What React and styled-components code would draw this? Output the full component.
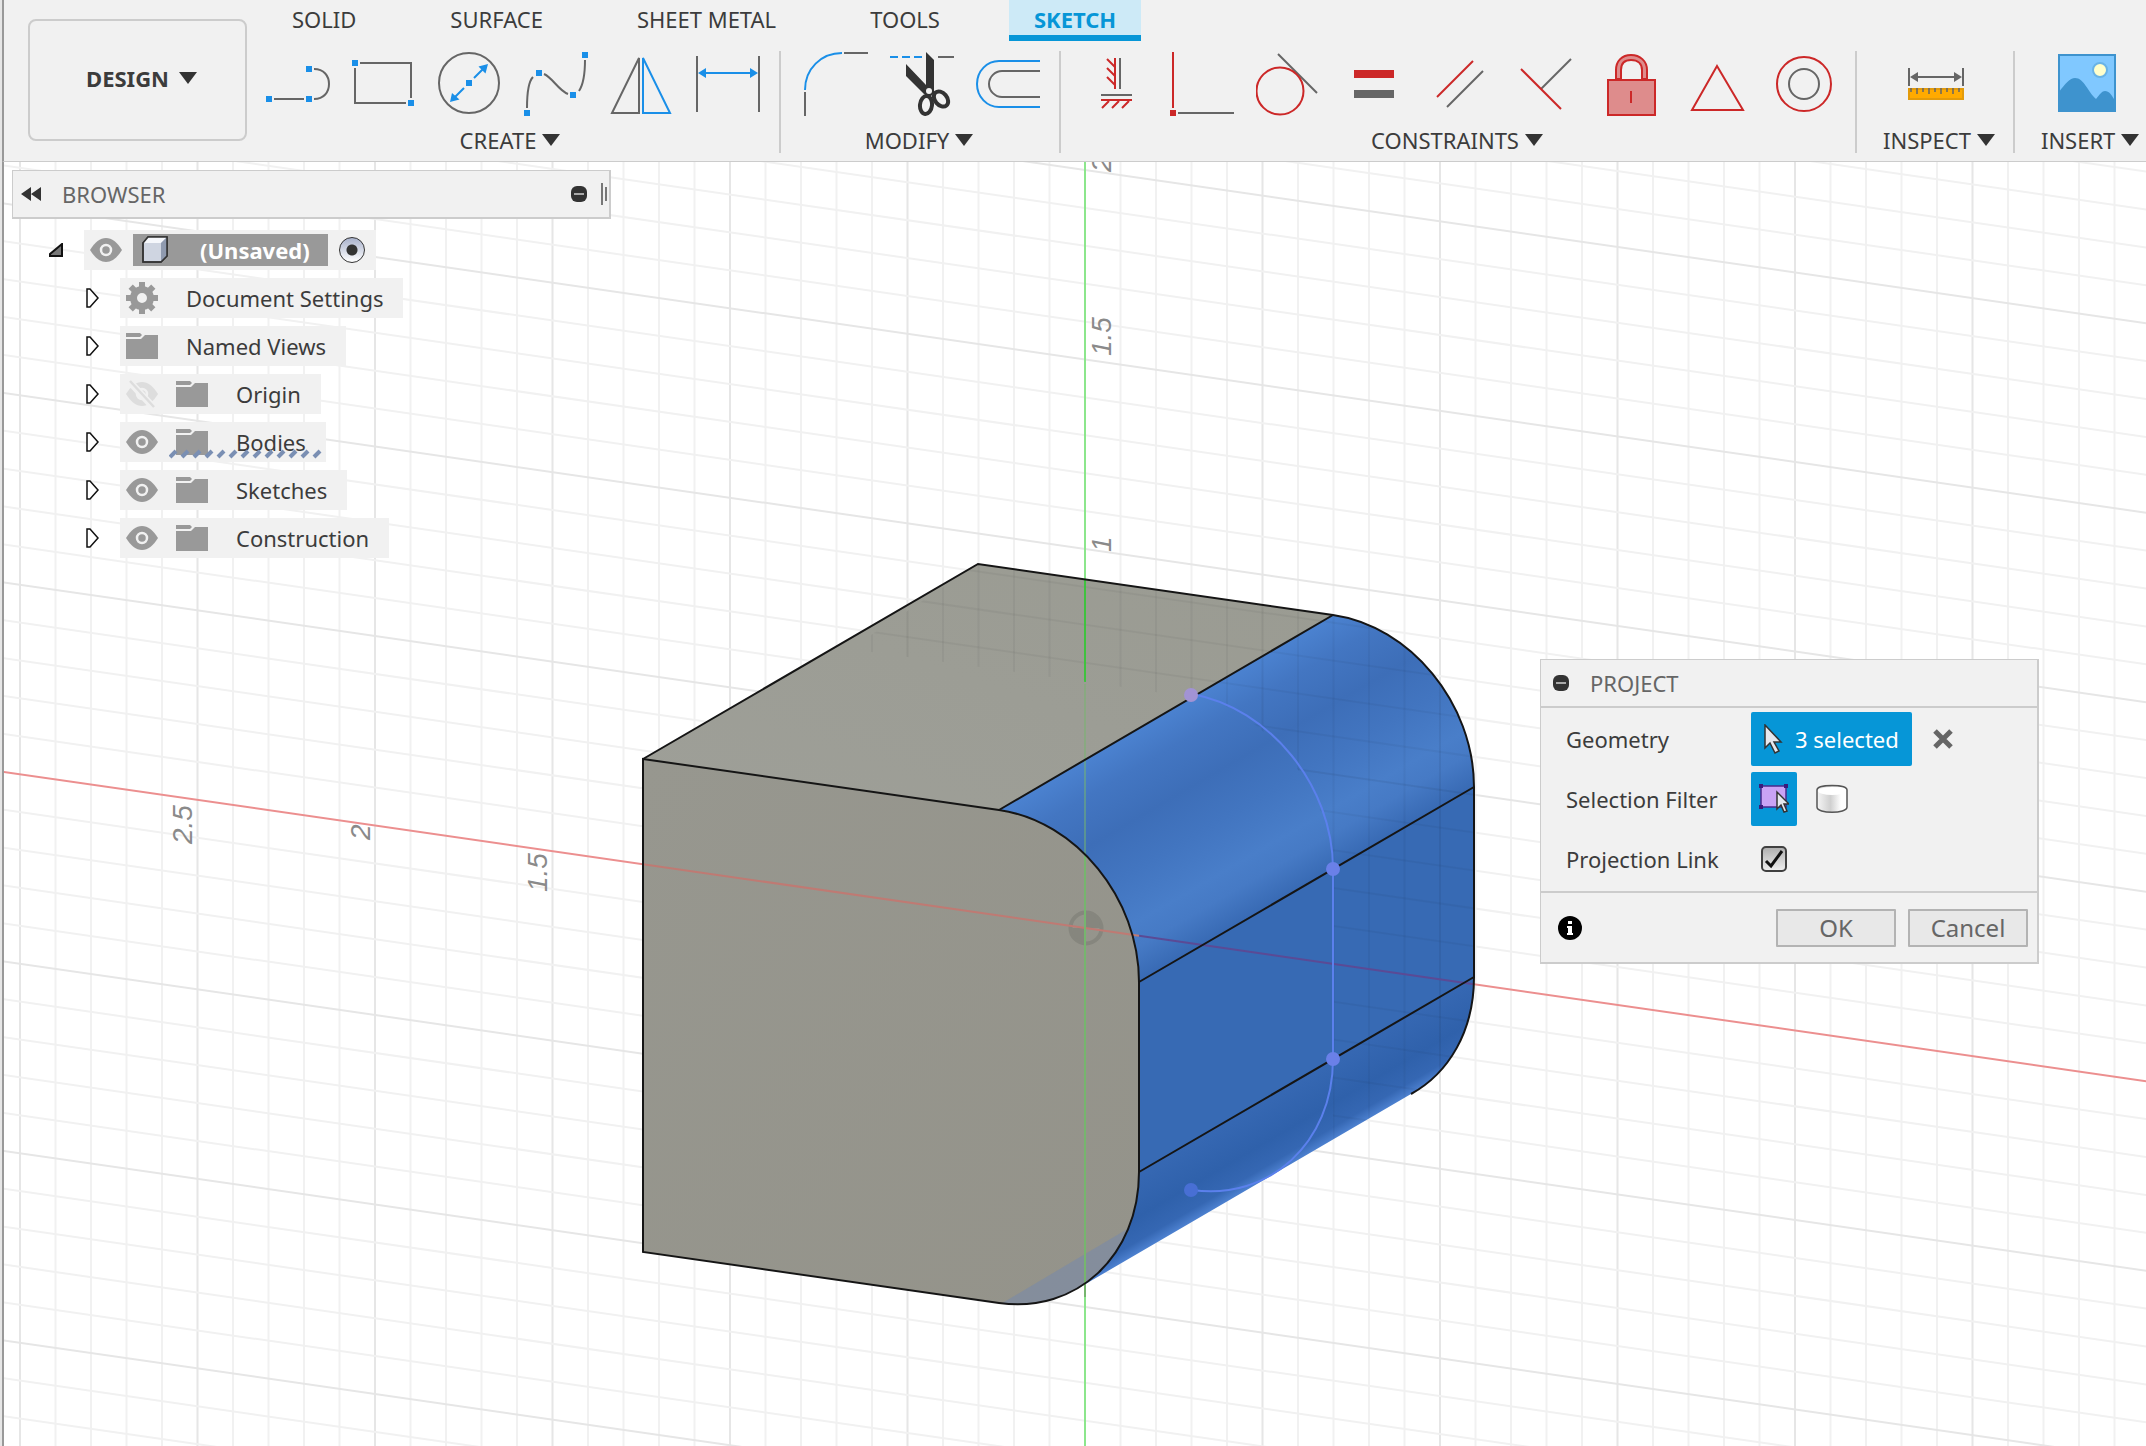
import React from 'react';
import styled, { createGlobalStyle } from 'styled-components';

const GlobalStyle = createGlobalStyle`
    * {
        box-sizing: border-box;
    }
    body {
        margin: 0;
        background: #FFFFFF;
        color: #3C3C3C;
        font-family: "Noto Sans", "Open Sans", sans-serif;
        font-size: 22px;
        line-height: 28px;
    }
    button {
        margin: 0;
        padding: 0;
        border: 0;
        background: none;
        color: inherit;
        font: inherit;
    }
    svg {
        display: block;
        flex: none;
    }
`;

const Page = styled.div`
    display: flex;
    flex-direction: column;
    min-height: 100vh;
    border-left: 2px solid #E6E6E6;
    overflow: hidden;
`;

/* toolbar */
const Toolbar = styled.header`
    display: flex;
    height: 162px;
    background: #F1F1F1;
    border-left: 2px solid #999999;
    border-bottom: 1px solid #CCCCCC;
`;
const Workspace = styled.button`
    display: flex;
    align-items: center;
    justify-content: center;
    gap: 10px;
    flex: none;
    width: 219px;
    height: 122px;
    margin: 19px 0 0 24px;
    padding: 0 0 4px 8px;
    border: 2px solid #CCCCCC;
    border-radius: 8px;
    font-weight: bold;
`;
const ToolArea = styled.div`
    flex: 1;
    min-width: 0;
`;
const Tabs = styled.nav`
    display: flex;
    gap: 44px;
    height: 41px;
    margin-left: 20px;
`;
const Tab = styled.button`
    height: 41px;
    padding: 2px 25px 0;
    white-space: nowrap;
    border-bottom: 6px solid ${({$active}) => $active ? '#0696D7' : 'transparent'};
    background: ${({$active}) => $active ? '#CDEAF7' : 'transparent'};
    color: ${({$active}) => $active ? '#0696D7' : 'inherit'};
    font-weight: ${({$active}) => $active ? 'bold' : 'normal'};
`;
const Groups = styled.div`
    display: flex;
    height: 102px;
    margin-top: 10px;
`;
const Group = styled.section`
    display: flex;
    flex: none;
    flex-direction: column;
    align-items: center;
    padding: ${({$compact}) => $compact ? '0 18px 0 20px' : '0 19px 0 23px'};
    border-left: 2px solid #CCCCCC;

    &:first-child {
        padding-left: 17px;
        border-left-color: transparent;
    }
`;
const Tools = styled.div`
    display: flex;
    gap: 22px;
    padding: 1px 0 10px;
`;
const Tool = styled.button`
    width: 64px;
    height: 64px;
`;
const GroupLabel = styled.button`
    display: flex;
    align-items: center;
    gap: 6px;
    margin: ${({$compact}) => $compact ? '0 0 0 6px' : '0 6px 0 0'};
`;

/* canvas */
const Stage = styled.main`
    position: relative;
    flex: 1;
    border-left: 2px solid #999999;
`;
const Scene = styled.svg`
    position: absolute;
    top: 0;
    left: 0;
    width: 100%;
    height: 100%;
`;

/* browser */
const Browser = styled.aside`
    position: relative;
    width: 599px;
    margin: 8px 0 0 8px;
`;
const BrowserBar = styled.div`
    display: flex;
    align-items: center;
    height: 49px;
    padding: 0 2px 0 8px;
    background: #F1F1F1;
    border: solid #CCCCCC;
    border-width: 1px 2px 2px 1px;
    color: #666666;
`;
const PanelTitle = styled.h2`
    flex: 1;
    margin: 0 0 0 21px;
    font-size: 22px;
    font-weight: normal;
`;
const Grip = styled.div`
    display: flex;
    gap: 2px;
    align-items: center;
    margin-left: 14px;

    &::before, &::after {
        content: "";
        width: 2px;
        height: 22px;
        background: #777777;
    }
    &::after {
        height: 14px;
    }
`;
const Tree = styled.ul`
    display: flex;
    flex-direction: column;
    gap: 8px;
    margin: 11px 0 0;
    padding: 0;
    list-style: none;
`;
const Row = styled.li`
    display: flex;
    align-items: center;
    height: 40px;
    padding-left: ${({$root}) => $root ? '37px' : '74px'};
`;
const Expander = styled.button`
    width: ${({$root}) => $root ? '35px' : '34px'};
`;
const Item = styled.div`
    position: relative;
    display: flex;
    align-items: center;
    gap: 18px;
    height: 40px;
    padding: 0 20px 0 6px;
    background: #F1F1F1;
`;
const RootItem = styled(Item)`
    gap: 11px;
    padding-right: 11px;
`;
const ItemName = styled.span`
    margin-left: 10px;
    white-space: nowrap;
`;
const RootName = styled.div`
    display: flex;
    align-items: center;
    gap: 31px;
    height: 32px;
    padding: 0 18px 0 8px;
    background: #999999;
    color: #FFFFFF;
    font-weight: bold;
`;
const Activate = styled.input`
    appearance: none;
    width: 26px;
    height: 26px;
    margin: 0;
    border: 1px solid #333333;
    border-radius: 50%;
    background: radial-gradient(circle, #333333 5px, transparent 6px), linear-gradient(#A9B2CC, #FFFFFF);
`;
const Hatch = styled.svg`
    position: absolute;
    left: 49px;
    bottom: 3px;
`;

/* dialog */
const Dialog = styled.form`
    position: absolute;
    top: 497px;
    right: 107px;
    width: 499px;
    background: #F1F1F1;
    border: solid #CCCCCC;
    border-width: 1px 2px 2px 1px;
`;
const DialogHeader = styled.div`
    display: flex;
    align-items: center;
    height: 48px;
    padding-left: 12px;
    border-bottom: 2px solid #CCCCCC;
    color: #666666;
`;
const Fields = styled.div`
    display: grid;
    grid-template-columns: 185px 1fr;
    grid-auto-rows: 54px;
    row-gap: 6px;
    align-items: center;
    height: 185px;
    padding: 4px 0 0 25px;
    border-bottom: 2px solid #CCCCCC;
`;
const FieldName = styled.label`
    white-space: nowrap;
`;
const Field = styled.div`
    display: flex;
    align-items: center;
    height: 54px;
`;
const Selection = styled.button`
    display: flex;
    align-items: center;
    gap: 12px;
    height: 54px;
    padding: 0 13px 0 12px;
    border-radius: 2px;
    background: #0696D7;
    color: #FFFFFF;
`;
const ClearButton = styled.button`
    margin-left: 20px;
`;
const FilterButton = styled.button`
    display: flex;
    align-items: center;
    justify-content: center;
    width: 46px;
    height: 54px;
    margin-right: 12px;
    border-radius: 2px;
    background: ${({$active}) => $active ? '#0696D7' : 'transparent'};
`;
const CheckWrap = styled.span`
    position: relative;
    margin-left: 10px;

    svg {
        position: absolute;
        top: 0;
        left: 0;
        pointer-events: none;
    }
`;
const Checkbox = styled.input`
    display: block;
    appearance: none;
    width: 26px;
    height: 26px;
    margin: 0;
    border: 2px solid #404040;
    border-radius: 5px;
    background: linear-gradient(#B0B0B0, #EEEEEE);
`;
const DialogFooter = styled.div`
    display: flex;
    align-items: center;
    gap: 12px;
    height: 69px;
    padding: 0 9px 0 17px;
`;
const Info = styled.button`
    margin-right: auto;
`;
const ActionButton = styled.button`
    width: 120px;
    height: 38px;
    border: 2px solid #B3B3B3;
    border-radius: 1px;
    background: #E8E8E8;
    color: #666666;
    font-size: 24px;
`;

const GRAY = '#666666';
const BLUE = '#1A8FE8';
const RED = '#CC2828';

const Dot = ({x, y, color = BLUE}) => <rect x={x - 3} y={y - 3} width="6" height="6" fill={color} />;

const Caret = () => (
    <svg width="18" height="12" viewBox="0 0 18 12"><path d="M0 0H18L9 12Z" fill="#333333" /></svg>
);

const icons = {
    line: <>
        <path d="M8 47H38M48 17C58 17 63 24 63 32S58 47 48 47" stroke={GRAY} />
        <Dot x={3} y={47} /><Dot x={43} y={17} /><Dot x={43} y={47} />
    </>,
    rectangle: <>
        <path d="M8 11H59V46M54 51H3V16" stroke={GRAY} />
        <Dot x={3} y={11} /><Dot x={59} y={51} />
    </>,
    circle: <>
        <circle cx="31" cy="31" r="30" stroke={GRAY} />
        <path d="M36 26L45 17M26 36L17 45" stroke={BLUE} />
        <path d="M50 12L40.500 14.500L47.500 21.500ZM12 50L14 41L21.500 47.500Z" fill={BLUE} />
        <Dot x={31} y={31} />
    </>,
    spline: <>
        <path d="M3 56C3 40 5 29 9 25M20 22C29 26 34 38 44 42M55 39C59 33 61 22 61 8" stroke={GRAY} />
        <Dot x={3} y={61} /><Dot x={15} y={21} /><Dot x={49} y={43} /><Dot x={61} y={3} />
    </>,
    mirror: <>
        <path d="M29 6V61H2Z" stroke={GRAY} />
        <path d="M33 6V61H60Z" stroke={BLUE} />
    </>,
    dimension: <>
        <path d="M1 4V60M63 4V60" stroke={GRAY} />
        <path d="M5 21H59" stroke={BLUE} />
        <path d="M2 21L10 16V26ZM62 21L54 16V26Z" fill={BLUE} />
    </>,
    fillet: <>
        <path d="M1 38C1 17 17 1 38 1" stroke={BLUE} />
        <path d="M40 1H64M1 40V64" stroke={GRAY} />
    </>,
    trim: <>
        <path d="M0 5H8M12 5H20M24 5H32" stroke={BLUE} />
        <path d="M48 5H64" stroke={GRAY} />
        <path d="M36 0L44 8V41L39 46L34 42L16 24V12L36 33Z" fill="#333333" />
        <ellipse cx="36" cy="53" rx="6" ry="9" stroke="#333333" strokeWidth="4" transform="rotate(6 36 53)" />
        <ellipse cx="51" cy="47" rx="6" ry="8.500" stroke="#333333" strokeWidth="4" transform="rotate(-40 51 47)" />
        <circle cx="39" cy="39" r="3" fill="#F1F1F1" />
    </>,
    offset: <>
        <path d="M64 9H23C11 9 1 19 1 32S11 55 23 55H64" stroke={BLUE} />
        <path d="M64 19H26C19 19 13 25 13 32S19 45 26 45H64" stroke={GRAY} />
    </>,
    horizontal: <>
        <path d="M36 6V37M17 43H48" stroke={GRAY} />
        <path d="M31 6V37M23 7L31 15M23 16L31 24M23 25L31 33M17 48H48M25 49L18 56M35 49L28 56M45 49L38 56" stroke={RED} />
    </>,
    coincident: <>
        <path d="M3 0V56" stroke={RED} />
        <path d="M8 61H64" stroke={GRAY} />
        <Dot x={3} y={61} color={RED} />
    </>,
    tangent: <>
        <path d="M22 2L61 41" stroke={GRAY} />
        <circle cx="24" cy="39" r="23.500" stroke={RED} />
    </>,
    equal: <>
        <rect x="12" y="18" width="40" height="8" fill={RED} />
        <rect x="12" y="38" width="40" height="8" fill={GRAY} />
    </>,
    parallel: <>
        <path d="M9 45L45 9" stroke={RED} />
        <path d="M19 55L55 19" stroke={GRAY} />
    </>,
    perpendicular: <>
        <path d="M27 37L57 7" stroke={GRAY} />
        <path d="M7 17L47 57" stroke={RED} />
    </>,
    fix: <>
        <path d="M16 27V18C16 9 22 3 31 3S47 9 47 18V27H42V18C42 12 38 8 31 8S21 12 21 18V27Z" fill="#DE8C8C" stroke={RED} />
        <rect x="8" y="28" width="47" height="35" fill="#DE8C8C" stroke={RED} />
        <path d="M31 39V51" stroke={RED} />
    </>,
    midpoint: <path d="M31 14L57 58H6Z" stroke={RED} />,
    concentric: <>
        <circle cx="32" cy="32" r="27" stroke={RED} />
        <circle cx="32" cy="32" r="15" stroke={GRAY} />
    </>,
    measure: <>
        <path d="M5 16V34M59 16V34M10 25H54" stroke={GRAY} />
        <path d="M6 25L14 20V30ZM58 25L50 20V30Z" fill={GRAY} />
        <rect x="5" y="37" width="54" height="10" fill="#FFAA00" stroke="#E39B0B" />
        <path d="M7 36V40M13 36V42M19 36V40M25 36V42M31 36V40M37 36V42M43 36V40M49 36V42M55 36V40" stroke={GRAY} strokeWidth="1.500" />
    </>,
    canvas: <>
        <rect x="4" y="3" width="56" height="56" fill="#80C8FF" stroke="#3E93CE" />
        <path d="M4 40C10 32 15 26 20 26C29 26 33 40 41 47C45 42 47 39 50 39C54 39 57 43 60 49V60H4Z" fill="#3E93CE" />
        <circle cx="45" cy="18" r="7" fill="#FFFFCC" stroke="#69B3E6" />
    </>,
};

const tabs = ['SOLID', 'SURFACE', 'SHEET METAL', 'TOOLS', 'SKETCH'];
const groups = [
    {name: 'CREATE', tools: ['line', 'rectangle', 'circle', 'spline', 'mirror', 'dimension']},
    {name: 'MODIFY', tools: ['fillet', 'trim', 'offset']},
    {name: 'CONSTRAINTS', tools: ['horizontal', 'coincident', 'tangent', 'equal', 'parallel', 'perpendicular', 'fix', 'midpoint', 'concentric']},
    {name: 'INSPECT', tools: ['measure']},
    {name: 'INSERT', tools: ['canvas']},
];
const nodes = [
    {name: 'Document Settings', icon: 'gear'},
    {name: 'Named Views', icon: 'folder'},
    {name: 'Origin', icon: 'folder', eye: 'off'},
    {name: 'Bodies', icon: 'folder', eye: 'on', hatched: true},
    {name: 'Sketches', icon: 'folder', eye: 'on'},
    {name: 'Construction', icon: 'folder', eye: 'on'},
];

const Eye = ({off}) => (
    <svg width="32" height="32" viewBox="0 0 32 32" fill="none">
        <path d="M0 16C5 8 10 4 16 4S27 8 32 16C27 24 22 28 16 28S5 24 0 16Z" fill={off ? '#DDDDDD' : '#999999'} />
        <circle cx="16" cy="16" r="5" stroke="#F1F1F1" strokeWidth="2.500" />
        {off && <path d="M2 2L28 30" stroke="#F1F1F1" strokeWidth="7" />}
        {off && <path d="M4 3L28 29" stroke="#DDDDDD" strokeWidth="2.500" />}
    </svg>
);

const Folder = () => (
    <svg width="32" height="32" viewBox="0 0 32 32" fill="#999999">
        <path d="M0 3H14L16 5L14 7H0ZM0 9H15L19 5H32V29H0Z" />
    </svg>
);

const Gear = () => (
    <svg width="32" height="32" viewBox="0 0 32 32" fill="none" stroke="#999999">
        <circle cx="16" cy="16" r="8.500" strokeWidth="7" />
        {[0, 45, 90, 135].map((angle) =>
            <path key={angle} d="M16 0V6M16 26V32" strokeWidth="6" transform={`rotate(${angle} 16 16)`} />
        )}
    </svg>
);

const Collapse = () => (
    <svg width="16" height="16" viewBox="0 0 16 16">
        <rect width="16" height="16" rx="6" fill="#333333" />
        <path d="M3 8H13" stroke="#AAAAAA" strokeWidth="2" />
    </svg>
);

// The grid, axes and body share one set of model coordinates
const ORIGIN = {x: 1085, y: 927};
const SLOPE = 0.1444;
const range = (from, to) => Array.from({length: to - from + 1}, (_, i) => from + i);
const slant = (offset) => {
    const at = (x) => ORIGIN.y + offset + (x - ORIGIN.x) * SLOPE;
    return `M0 ${at(0)}L2148 ${at(2148)}`;
};

const Grid = ({color, majorColor}) => (
    <g fill="none" strokeWidth="2">
        {range(-30, 30).filter((i) => i !== 0).map((i) =>
            <path key={`v${i}`} d={`M${ORIGIN.x + i * 35.5} 0V1446`} stroke={i % 5 ? color : majorColor} />
        )}
        {range(-26, 20).filter((i) => i !== 0).map((i) =>
            <path key={`h${i}`} d={slant(i * 37.9)} stroke={i % 5 ? color : majorColor} />
        )}
    </g>
);

const axisLabels = [
    {text: '2.5', x: 192, y: 843},
    {text: '2', x: 370, y: 839},
    {text: '1.5', x: 547, y: 891},
    {text: '2', x: 1111, y: 171},
    {text: '1.5', x: 1111, y: 355},
    {text: '1', x: 1111, y: 551},
];

const FRONT = 'M643 758L999 809C1076 820 1139 897 1139 981V1171C1139 1255 1076 1313 999 1302L643 1251Z';
const SKETCH = 'M1192 693C1269 707 1333 784 1333 868V1058C1333 1142 1269 1200 1192 1189';

const Model = () => (
    <Scene viewBox="4 161 2142 1284" preserveAspectRatio="xMidYMid slice" role="img" aria-label="Model">
        <defs>
            <linearGradient id="topFillet" gradientUnits="userSpaceOnUse" x1="999" y1="809" x2="1109" y2="998">
                <stop offset="0" stopColor="#4B82D0" />
                <stop offset="0.150" stopColor="#4376C2" />
                <stop offset="0.350" stopColor="#3D6EB8" />
                <stop offset="0.550" stopColor="#4275C0" />
                <stop offset="0.760" stopColor="#497EC9" />
                <stop offset="0.860" stopColor="#467AC5" />
                <stop offset="1" stopColor="#386AB4" />
            </linearGradient>
            <linearGradient id="bottomFillet" gradientUnits="userSpaceOnUse" x1="1139" y1="1171" x2="1174" y2="1231">
                <stop offset="0" stopColor="#3668B3" />
                <stop offset="0.550" stopColor="#2F61AB" />
                <stop offset="0.850" stopColor="#3567B3" />
                <stop offset="1" stopColor="#4C80CF" />
            </linearGradient>
            <linearGradient id="topFace" x1="0" y1="1" x2="1" y2="0">
                <stop offset="0" stopColor="#9E9F98" />
                <stop offset="1" stopColor="#9A9B92" />
            </linearGradient>
            <linearGradient id="frontFace" x1="0" y1="0" x2="1" y2="1">
                <stop offset="0" stopColor="#97978F" />
                <stop offset="1" stopColor="#94938A" />
            </linearGradient>
            <clipPath id="behind">
                <path d="M978 563L1332 614C1410 625 1474 702 1474 786V976C1474 1030 1447 1072 1411 1093L1333 1138V868C1330 800 1285 735 1225 705L1150 690L850 648Z" />
            </clipPath>
            <clipPath id="front"><path d={FRONT} /></clipPath>
        </defs>
        <rect width="2148" height="1446" fill="#FFFFFF" />
        <Grid color="#F1F1F1" majorColor="#E6E6E6" />
        <path d={slant(0)} stroke="#EC8F8F" strokeWidth="2" />
        <path d="M1085 161V1446" stroke="#8CE68C" strokeWidth="2" />
        <g fill="#8A8A8A" fontFamily="Liberation Sans, sans-serif" fontSize="28" fontStyle="italic">
            {axisLabels.map(({text, x, y}) =>
                <text key={`${x}-${y}`} transform={`translate(${x} ${y}) rotate(-90)`}>{text}</text>
            )}
        </g>

        <path d="M643 758L978 563L1333 614L999 809Z" fill="url(#topFace)" />
        <path d="M999 809L1333 614C1410 625 1474 702 1474 786L1139 981Z" fill="url(#topFillet)" />
        <path d="M1139 981L1474 786V976L1139 1171Z" fill="#376AB4" />
        <path d="M1139 1171L1474 976C1474 1030 1449 1072 1411 1093L1077 1288Z" fill="url(#bottomFillet)" />
        <g clipPath="url(#behind)">
            <Grid color="rgba(0, 0, 0, 0.04)" majorColor="rgba(0, 0, 0, 0.06)" />
            <path d="M1085 560V683" stroke="#3FC23F" strokeWidth="2" />
        </g>
        <path d={FRONT} fill="url(#frontFace)" />
        <path d="M999 1304L1129 1227L1145 1320H999Z" fill="#7F8CA0" opacity="0.800" clipPath="url(#front)" />
        <g fill="none">
            <g stroke="#86867E">
                <circle cx="1086" cy="927" r="15.500" strokeWidth="4" />
                <path d="M1086 927V913A14 14 0 0 1 1100 927ZM1086 927V941A14 14 0 0 1 1072 927Z" fill="#86867E" stroke="none" />
            </g>
            <path d="M643 863.200L1139 934.800" stroke="#BF7A73" strokeWidth="2" />
            <path d="M1139 934.800L1474 983.200" stroke="#5B4A95" strokeWidth="2" />
            <path d="M1085 683V855" stroke="#76B56E" strokeWidth="2" opacity="0.500" />
            <path d="M1085 855V1296" stroke="#76B56E" strokeWidth="2" />
            <g stroke="#151515" strokeWidth="2">
                <path d={FRONT} />
                <path d="M643 758L978 563L1333 614C1410 625 1474 702 1474 786V976C1474 1030 1449 1072 1411 1093" />
                <path d="M999 809L1333 614M1139 981L1474 786M1139 1171L1474 976" />
            </g>
            <path d={SKETCH} stroke="#5B80EC" strokeWidth="2" />
        </g>
        <circle cx="1191" cy="694" r="7" fill="#A293D4" />
        <circle cx="1333" cy="868" r="7" fill="#6A80E8" />
        <circle cx="1333" cy="1058" r="7" fill="#6A80E8" />
        <circle cx="1191" cy="1189" r="7" fill="#486FD4" />
    </Scene>
);

const TreeNode = ({node}) => (
    <Row>
        <Expander aria-label={`Expand ${node.name}`}>
            <svg width="14" height="20" viewBox="0 0 14 20">
                <path d="M1 1H4L12 10L4 19H1Z" fill="#FFFFFF" stroke="#111111" strokeWidth="1.500" />
            </svg>
        </Expander>
        <Item>
            {node.eye && <button aria-label={`Show or hide ${node.name}`}><Eye off={node.eye === 'off'} /></button>}
            {node.icon === 'gear' ? <Gear /> : <Folder />}
            <ItemName>{node.name}</ItemName>
            {node.hatched &&
                <Hatch width="154" height="10" viewBox="0 0 154 10">
                    {range(0, 12).map((i) =>
                        <path key={i} d={`M${i * 12 + 1} 8L${i * 12 + 7} 2`} stroke="#7A8FB3" strokeWidth="4" />
                    )}
                </Hatch>
            }
        </Item>
    </Row>
);

const BrowserPanel = () => (
    <Browser>
        <BrowserBar>
            <button aria-label="Collapse browser">
                <svg width="20" height="14" viewBox="0 0 20 14"><path d="M0 7L10 0V14ZM10 7L20 0V14Z" fill="#333333" /></svg>
            </button>
            <PanelTitle>BROWSER</PanelTitle>
            <button aria-label="Minimize"><Collapse /></button>
            <Grip />
        </BrowserBar>
        <Tree>
            <Row $root>
                <Expander $root aria-label="Collapse document">
                    <svg width="14" height="14" viewBox="0 0 14 14">
                        <path d="M13 1V13H1V11Z" fill="#777777" stroke="#111111" strokeWidth="2" />
                    </svg>
                </Expander>
                <RootItem>
                    <button aria-label="Show or hide document"><Eye /></button>
                    <RootName>
                        <svg width="28" height="28" viewBox="0 0 28 28" stroke="#333333" strokeWidth="1.500">
                            <path d="M2 7L7 1H26V20L20 26H2Z" fill="#CFD5E1" />
                            <path d="M2 7L7 1H26L20 7Z" fill="#F5F7FB" stroke="none" />
                            <path d="M20 7L26 1V20L20 26Z" fill="#8F9AAF" stroke="none" />
                            <path d="M2 7L7 1H26V20L20 26H2Z" fill="none" />
                        </svg>
                        (Unsaved)
                    </RootName>
                    <Activate type="radio" name="active" defaultChecked aria-label="Activate document" />
                </RootItem>
            </Row>
            {nodes.map((node) => <TreeNode key={node.name} node={node} />)}
        </Tree>
    </Browser>
);

const ProjectDialog = () => (
    <Dialog onSubmit={(e) => e.preventDefault()}>
        <DialogHeader>
            <button type="button" aria-label="Collapse"><Collapse /></button>
            <PanelTitle>PROJECT</PanelTitle>
        </DialogHeader>
        <Fields>
            <FieldName htmlFor="geometry">Geometry</FieldName>
            <Field>
                <Selection type="button" id="geometry">
                    <svg width="20" height="30" viewBox="0 0 20 30">
                        <path d="M2 1V24L7 19L12 29L16 27L11 18H18Z" fill="#E6E8EE" stroke="#333333" strokeWidth="1.500" />
                    </svg>
                    3 selected
                </Selection>
                <ClearButton type="button" aria-label="Clear selection">
                    <svg width="22" height="22" viewBox="0 0 22 22"><path d="M3 3L19 19M19 3L3 19" stroke="#666666" strokeWidth="5" /></svg>
                </ClearButton>
            </Field>
            <FieldName htmlFor="filter">Selection Filter</FieldName>
            <Field>
                <FilterButton type="button" id="filter" $active aria-label="Specified entities">
                    <svg width="30" height="30" viewBox="0 0 30 30">
                        <rect x="2" y="2" width="25" height="21" fill="#C9A3F5" stroke="#4A2A8C" strokeWidth="1.500" />
                        <path d="M0 0H4V4H0ZM25 0H29V4H25ZM0 21H4V25H0Z" fill="#3A1A7C" />
                        <path d="M18 8V25L22 21L25 28L28 27L25 20H30Z" fill="#E6E8EE" stroke="#333333" strokeWidth="1.500" />
                    </svg>
                </FilterButton>
                <FilterButton type="button" aria-label="Bodies">
                    <svg width="32" height="30" viewBox="0 0 32 30">
                        <defs>
                            <linearGradient id="drum">
                                <stop offset="0" stopColor="#F6F6F6" />
                                <stop offset="0.450" stopColor="#D0D0D0" />
                                <stop offset="0.800" stopColor="#FFFFFF" />
                            </linearGradient>
                        </defs>
                        <path d="M1 6V23C1 30 31 30 31 23V6C31 0 1 0 1 6Z" fill="url(#drum)" stroke="#555555" strokeWidth="1.500" />
                        <ellipse cx="16" cy="7" rx="14" ry="4" fill="#FFFFFF" />
                    </svg>
                </FilterButton>
            </Field>
            <FieldName htmlFor="link">Projection Link</FieldName>
            <Field>
                <CheckWrap>
                    <Checkbox type="checkbox" id="link" defaultChecked />
                    <svg width="26" height="26" viewBox="0 0 26 26" fill="none">
                        <path d="M5 15L10 20L21 5" stroke="#111111" strokeWidth="3" />
                    </svg>
                </CheckWrap>
            </Field>
        </Fields>
        <DialogFooter>
            <Info type="button" aria-label="Information">
                <svg width="24" height="24" viewBox="0 0 24 24">
                    <circle cx="12" cy="12" r="12" fill="#000000" />
                    <path d="M10 5H14V8H10ZM9 10H14V17H15V19H9V17H10V12H9Z" fill="#FFFFFF" />
                </svg>
            </Info>
            <ActionButton type="submit">OK</ActionButton>
            <ActionButton type="button">Cancel</ActionButton>
        </DialogFooter>
    </Dialog>
);

const ToolGroup = ({group}) => {
    const compact = group.tools.length === 1;

    return (
        <Group $compact={compact}>
            <Tools>
                {group.tools.map((tool) =>
                    <Tool key={tool} aria-label={tool}>
                        <svg width="64" height="64" viewBox="0 0 64 64" fill="none" strokeWidth="2">{icons[tool]}</svg>
                    </Tool>
                )}
            </Tools>
            <GroupLabel $compact={compact}>{group.name} <Caret /></GroupLabel>
        </Group>
    );
};

const App = () => (
    <Page>
        <GlobalStyle />
        <Toolbar>
            <Workspace>DESIGN <Caret /></Workspace>
            <ToolArea>
                <Tabs>
                    {tabs.map((tab) => <Tab key={tab} $active={tab === 'SKETCH'}>{tab}</Tab>)}
                </Tabs>
                <Groups>
                    {groups.map((group) => <ToolGroup key={group.name} group={group} />)}
                </Groups>
            </ToolArea>
        </Toolbar>
        <Stage>
            <Model />
            <BrowserPanel />
            <ProjectDialog />
        </Stage>
    </Page>
);

export default App;
